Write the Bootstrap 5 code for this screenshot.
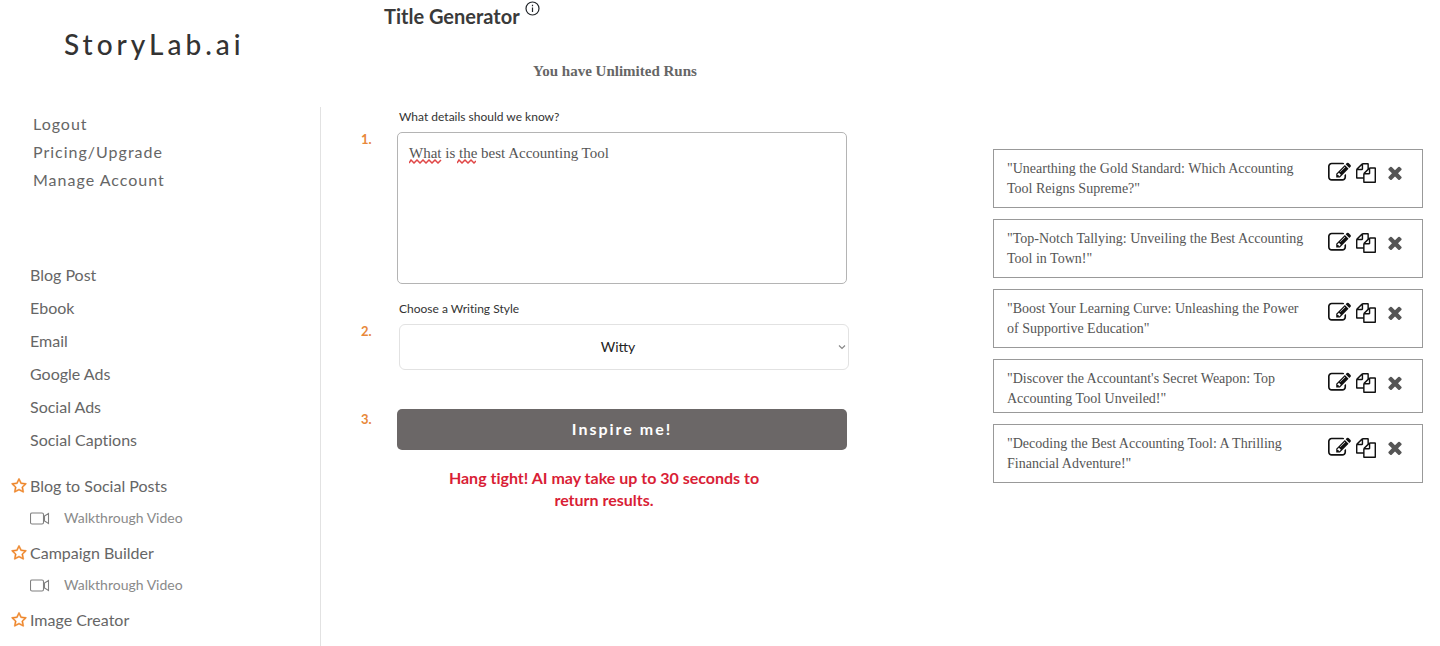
<!DOCTYPE html>
<html lang="en">
<head>
<meta charset="utf-8">
<meta name="viewport" content="width=device-width, initial-scale=1">
<title>StoryLab.ai - Title Generator</title>
<link href="https://cdn.jsdelivr.net/npm/bootstrap@5.3.0/dist/css/bootstrap.min.css" rel="stylesheet">
<style>
  body { font-family: Lato, sans-serif; color: #666; background: #fff; font-size: 16px; font-variant-ligatures: none; }
  a { color: inherit; text-decoration: none; }
  .sidebar { width: 321px; }
  .brand { height: 107px; padding: 24px 0 0 64px; font-size: 28px; line-height: 40px; letter-spacing: 4px; font-weight: 500; color: #333; }
  .side-body { border-right: 1px solid #e2e2e2; padding-top: 3px; min-height: 539px; }
  .account-links { padding-left: 33px; line-height: 28px; letter-spacing: 1px; margin-bottom: 64px; }
  .tool-links { padding-left: 30px; line-height: 33px; margin-bottom: 13px; }
  .star-links { padding-left: 11px; }
  .star-item { line-height: 33px; gap: 3px; }
  .star-item svg { width: 16px; height: 16px; fill: #ee8426; stroke: #ee8426; stroke-width: 50; }
  .video-item { line-height: 31px; font-size: 14px; color: #8a8a8a; padding-left: 19px; gap: 14px; margin-bottom: 3px; }
  .video-item svg { margin-top: 2px; }
  .workspace { gap: 146px; padding: 0 17px 0 40px; }
  .form-col { flex: 486 1 0; min-width: 0; }
  .results-col { flex: 430 1 0; min-width: 0; padding-top: 149px; }
  h1 { font-size: 20px; line-height: 24px; font-weight: 700; color: #3a3a3a; gap: 5px; margin: 0 0 0 23px; padding-top: 4px; }
  h1 button { line-height: 0; margin-top: -3px; color: #333; }
  .serif { font-family: "Liberation Serif", serif; }
  .runs { font-size: 15px; line-height: 20px; font-weight: 700; color: #666; margin: 33px 0 26px; padding-left: 22px; }
  .step-no { width: 36px; font-size: 13px; line-height: 20px; font-weight: 700; color: #e8883a; }
  .step-no.with-label { padding-top: 22px; }
  .form-label { font-size: 12px; line-height: 20px; color: #333; margin: 0 0 5px 2px; display: block; }
  textarea.form-control { height: 152px; padding: 10px 11px; border: 1px solid #b4b4b4; border-radius: 5px; font-size: 15px; line-height: 20px; color: #555; resize: none; }
  .squiggle { position: absolute; top: 27px; height: 5px; fill: none; stroke: #e04848; stroke-width: 1.5; }
  .style-row { margin-top: 15px; }
  .style-pick { height: 46px; border: 1px solid #e2e2e2; border-radius: 6px; text-align: center; text-align-last: center; font-size: 14px; color: #222; padding: 0 24px 2px 12px; margin: 0 -2px 0 2px; width: 100%;
    background-image: url("data:image/svg+xml,%3Csvg xmlns='http://www.w3.org/2000/svg' viewBox='0 0 8 8'%3E%3Cpath d='M1 2.5l3 3 3-3' fill='none' stroke='%23888' stroke-width='1.2'/%3E%3C/svg%3E"); background-size: 8px 8px; background-position: right 2px center; }
  .inspire-row { margin-top: 39px; }
  .inspire { height: 41px; background: #6b6767; border-radius: 5px; color: #fff; font-size: 16px; font-weight: 700; letter-spacing: 2px; padding: 0 0 2px; }
  .inspire:hover { background: #575353; color: #fff; }
  .wait { font-size: 16px; line-height: 22px; font-weight: 700; color: #d91e36; max-width: 340px; margin: 17px auto 0; }
  .result-list { gap: 11px; }
  .result { border: 1px solid #999; padding: 9px 20px 8px 13px; font-size: 14px; line-height: 20px; color: #555; gap: 16px; }
  .result.tight { padding-bottom: 3px; }
  .result p { flex: 1 1 0; margin: 0; }
  .result .tools { gap: 5px; padding-top: 2px; }
  .tools button { line-height: 0; color: #111; }
  .tools .del { color: #555; margin-left: 7px; padding-top: 1px; }
  svg { display: block; flex: none; }
  @media (max-width: 1399px) {
    .workspace { flex-direction: column; gap: 24px; }
    .results-col { padding: 0 0 24px 36px; flex: none; }
    .form-col { flex: none; }
  }
</style>
</head>
<body>
<svg width="0" height="0" class="position-absolute" aria-hidden="true">
  <symbol id="i-edit" viewBox="0 0 1792 1792"><path d="M888 1184l116-116-152-152-116 116v56h96v96h56zm440-720q-16-16-33 1l-350 350q-17 17-1 33t33-1l350-350q17-17 1-33zm80 594v190q0 119-84.500 203.500t-203.500 84.500h-832q-119 0-203.500-84.500t-84.500-203.500v-832q0-119 84.500-203.500t203.500-84.500h832q63 0 117 25 15 7 18 23 3 17-9 29l-49 49q-14 14-32 8-23-6-45-6h-832q-66 0-113 47t-47 113v832q0 66 47 113t113 47h832q66 0 113-47t47-113v-126q0-13 9-22l64-64q15-15 35-7t20 29zm-96-738l288 288-672 672h-288v-288zm444 132l-92 92-288-288 92-92q28-28 68-28t68 28l152 152q28 28 28 68t-28 68z"/></symbol>
  <symbol id="i-copy" viewBox="0 0 1792 1792"><path d="M1696 384q40 0 68 28t28 68v1216q0 40-28 68t-68 28h-960q-40 0-68-28t-28-68v-288h-544q-40 0-68-28t-28-68v-672q0-40 20-88t48-76l408-408q28-28 76-48t88-20h416q40 0 68 28t28 68v328q68-40 128-40h416zm-544 213l-299 299h299v-299zm-640-384l-299 299h299v-299zm196 647l316-316v-416h-384v416q0 40-28 68t-68 28h-416v640h512v-256q0-40 20-88t48-76zm956 804v-1152h-384v416q0 40-28 68t-68 28h-416v640h896z"/></symbol>
  <symbol id="i-del" viewBox="302 302 1188 1252"><path d="M1490 1322q0 40-28 68l-136 136q-28 28-68 28t-68-28l-294-294-294 294q-28 28-68 28t-68-28l-136-136q-28-28-28-68t28-68l294-294-294-294q-28-28-28-68t28-68l136-136q28-28 68-28t68 28l294 294 294-294q28-28 68-28t68 28l136 136q28 28 28 68t-28 68l-294 294 294 294q28 28 28 68z"/></symbol>
  <symbol id="i-star" viewBox="0 0 1792 1792"><path d="M1201 1004l306-297-422-62-189-382-189 382-422 62 306 297-73 421 378-199 377 199zm527-357q0 22-26 48l-363 354 86 500q1 7 1 20 0 50-41 50-19 0-40-12l-449-236-449 236q-22 12-40 12-21 0-31.500-14.500t-10.500-35.500q0-6 2-20l86-500-364-354q-25-27-25-48 0-37 56-46l502-73 225-455q19-41 49-41t49 41l225 455 502 73q56 9 56 46z"/></symbol>
  <symbol id="i-video" viewBox="0 0 20 13"><path d="M2 1h10q1.500 0 1.500 1.500v8q0 1.500-1.500 1.500H2Q.5 12 .5 10.500v-8Q.5 1 2 1zM14.500 4l4-2.500v10l-4-2.500z" fill="none" stroke="#808080" stroke-width="1.100"/></symbol>
</svg>

<div class="d-flex">
  <aside class="sidebar flex-shrink-0">
    <a href="#" class="brand d-block">StoryLab.ai</a>
    <nav class="side-body" aria-label="Tools">
      <ul class="account-links list-unstyled">
        <li><a href="#">Logout</a></li>
        <li><a href="#">Pricing/Upgrade</a></li>
        <li><a href="#">Manage Account</a></li>
      </ul>
      <ul class="tool-links list-unstyled">
        <li><a href="#">Blog Post</a></li>
        <li><a href="#">Ebook</a></li>
        <li><a href="#">Email</a></li>
        <li><a href="#">Google Ads</a></li>
        <li><a href="#">Social Ads</a></li>
        <li><a href="#">Social Captions</a></li>
      </ul>
      <div class="star-links">
        <a href="#" class="star-item d-flex align-items-center"><svg><use href="#i-star"/></svg>Blog to Social Posts</a>
        <a href="#" class="video-item d-flex align-items-center"><svg width="20" height="13"><use href="#i-video"/></svg>Walkthrough Video</a>
        <a href="#" class="star-item d-flex align-items-center"><svg><use href="#i-star"/></svg>Campaign Builder</a>
        <a href="#" class="video-item d-flex align-items-center"><svg width="20" height="13"><use href="#i-video"/></svg>Walkthrough Video</a>
        <a href="#" class="star-item d-flex align-items-center"><svg><use href="#i-star"/></svg>Image Creator</a>
      </div>
    </nav>
  </aside>

  <main class="workspace d-flex flex-grow-1">
    <form class="form-col" onsubmit="return false">
      <h1 class="d-flex align-items-start">Title Generator <button type="button" class="btn p-0 border-0" aria-label="About this tool"><svg width="15" height="15" viewBox="0 0 15 15" fill="none" stroke="currentColor" stroke-width="1.200"><circle cx="7.500" cy="7.500" r="6.500"/><path d="M7.500 6.500v4.500M7.500 3.800v1.400"/></svg></button></h1>
      <p class="runs serif text-center">You have Unlimited Runs</p>

      <div class="d-flex">
        <div class="step-no with-label">1.</div>
        <div class="flex-grow-1">
          <label class="form-label" for="details">What details should we know?</label>
          <div class="position-relative">
            <textarea id="details" class="form-control serif" spellcheck="false">What is the best Accounting Tool</textarea>
            <svg class="squiggle" style="left:12px" width="33"><path d="M0 4l2-3 3 3 3-3 3 3 3-3 3 3 3-3 3 3 3-3 3 3 3-3"/></svg>
            <svg class="squiggle" style="left:60px" width="19"><path d="M0 4l2-3 3 3 3-3 3 3 3-3 3 3 2-2"/></svg>
          </div>
        </div>
      </div>

      <div class="d-flex style-row">
        <div class="step-no with-label">2.</div>
        <div class="flex-grow-1">
          <label class="form-label" for="style">Choose a Writing Style</label>
          <select id="style" class="form-select style-pick"><option>Witty</option><option>Formal</option><option>Casual</option></select>
        </div>
      </div>

      <div class="d-flex inspire-row">
        <div class="step-no">3.</div>
        <div class="flex-grow-1">
          <button type="submit" class="btn inspire w-100">Inspire me!</button>
        </div>
      </div>
      <p class="wait text-center">Hang tight! AI may take up to 30 seconds to return results.</p>
    </form>

    <section class="results-col" aria-label="Results">
      <div class="result-list d-flex flex-column">
        <article class="result d-flex align-items-start serif">
          <p>"Unearthing the Gold Standard: Which Accounting Tool Reigns Supreme?"</p>
          <div class="tools d-flex align-items-center">
            <button type="button" class="btn p-0 border-0" aria-label="Edit"><svg width="23" height="23" fill="currentColor"><use href="#i-edit"/></svg></button>
            <button type="button" class="btn p-0 border-0" aria-label="Copy"><svg width="20" height="20" fill="currentColor"><use href="#i-copy"/></svg></button>
            <button type="button" class="btn p-0 border-0 del" aria-label="Delete"><svg width="14" height="14" fill="currentColor"><use href="#i-del"/></svg></button>
          </div>
        </article>
        <article class="result d-flex align-items-start serif">
          <p>"Top-Notch Tallying: Unveiling the Best Accounting Tool in Town!"</p>
          <div class="tools d-flex align-items-center">
            <button type="button" class="btn p-0 border-0" aria-label="Edit"><svg width="23" height="23" fill="currentColor"><use href="#i-edit"/></svg></button>
            <button type="button" class="btn p-0 border-0" aria-label="Copy"><svg width="20" height="20" fill="currentColor"><use href="#i-copy"/></svg></button>
            <button type="button" class="btn p-0 border-0 del" aria-label="Delete"><svg width="14" height="14" fill="currentColor"><use href="#i-del"/></svg></button>
          </div>
        </article>
        <article class="result d-flex align-items-start serif">
          <p>"Boost Your Learning Curve: Unleashing the Power of Supportive Education"</p>
          <div class="tools d-flex align-items-center">
            <button type="button" class="btn p-0 border-0" aria-label="Edit"><svg width="23" height="23" fill="currentColor"><use href="#i-edit"/></svg></button>
            <button type="button" class="btn p-0 border-0" aria-label="Copy"><svg width="20" height="20" fill="currentColor"><use href="#i-copy"/></svg></button>
            <button type="button" class="btn p-0 border-0 del" aria-label="Delete"><svg width="14" height="14" fill="currentColor"><use href="#i-del"/></svg></button>
          </div>
        </article>
        <article class="result tight d-flex align-items-start serif">
          <p>"Discover the Accountant's Secret Weapon: Top Accounting Tool Unveiled!"</p>
          <div class="tools d-flex align-items-center">
            <button type="button" class="btn p-0 border-0" aria-label="Edit"><svg width="23" height="23" fill="currentColor"><use href="#i-edit"/></svg></button>
            <button type="button" class="btn p-0 border-0" aria-label="Copy"><svg width="20" height="20" fill="currentColor"><use href="#i-copy"/></svg></button>
            <button type="button" class="btn p-0 border-0 del" aria-label="Delete"><svg width="14" height="14" fill="currentColor"><use href="#i-del"/></svg></button>
          </div>
        </article>
        <article class="result d-flex align-items-start serif">
          <p>"Decoding the Best Accounting Tool: A Thrilling Financial Adventure!"</p>
          <div class="tools d-flex align-items-center">
            <button type="button" class="btn p-0 border-0" aria-label="Edit"><svg width="23" height="23" fill="currentColor"><use href="#i-edit"/></svg></button>
            <button type="button" class="btn p-0 border-0" aria-label="Copy"><svg width="20" height="20" fill="currentColor"><use href="#i-copy"/></svg></button>
            <button type="button" class="btn p-0 border-0 del" aria-label="Delete"><svg width="14" height="14" fill="currentColor"><use href="#i-del"/></svg></button>
          </div>
        </article>
      </div>
    </section>
  </main>
</div>
<script src="https://cdn.jsdelivr.net/npm/bootstrap@5.3.0/dist/js/bootstrap.bundle.min.js"></script>
</body>
</html>
